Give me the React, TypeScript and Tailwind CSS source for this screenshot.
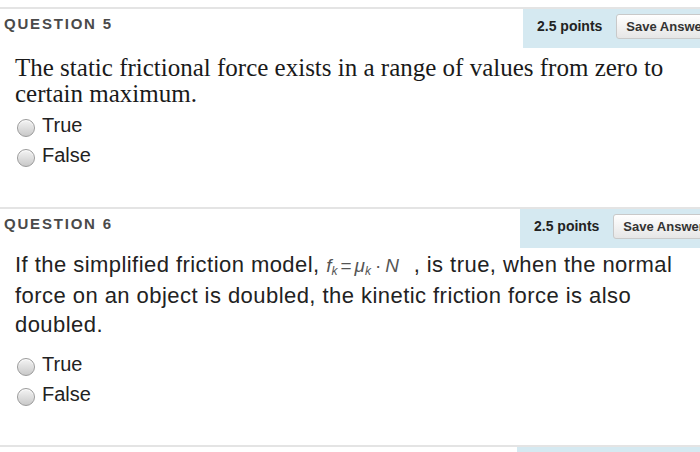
import React from "react";

const sans = { fontFamily: '"Liberation Sans", Arial, sans-serif' };
const serif = { fontFamily: '"Liberation Serif", "Times New Roman", serif' };

function Header({ label, boxLeft }: { label: string; boxLeft: number }) {
  return (
    <div className="flex h-[39px] border-t-2 border-[#e4e4e4] box-content">
      <div
        className="pl-[4px] pt-[6px] text-[15px] leading-[18px] font-bold tracking-[1.8px] text-[#4a4a4a]"
        style={sans}
      >
        {label}
      </div>
      <div className="flex-1" />
      <div
        className="flex items-start overflow-hidden bg-[#d5e9f1] pl-[14px] pt-[5px] shrink-0"
        style={{ width: 700 - boxLeft }}
      >
        <div className="flex h-[25px] items-center gap-[14px] whitespace-nowrap">
          <span className="text-[14px] font-bold text-[#222]" style={sans}>
            2.5 points
          </span>
          <span
            className="flex h-[25px] w-[110px] shrink-0 items-center rounded-[3px] border border-[#c9c9c9] bg-gradient-to-b from-white to-[#e6e6e6] px-[9px] text-[13px] font-bold text-[#333]"
            style={sans}
          >
            Save Answer
          </span>
        </div>
      </div>
    </div>
  );
}

function Radio({ label }: { label: string }) {
  return (
    <div className="flex h-[30px] items-center pl-[17px]">
      <span className="mt-[6px] h-[18px] w-[18px] shrink-0 rounded-full border border-[#9a9a9a] bg-gradient-to-b from-[#f4f4f4] to-[#c9c9c9] shadow-[inset_0_1px_1px_rgba(255,255,255,0.9)]" />
      <span className="ml-[7px] text-[20px] leading-[30px] text-[#222]" style={sans}>
        {label}
      </span>
    </div>
  );
}

export default function App() {
  return (
    <div className="h-[452px] w-[700px] overflow-hidden bg-white pt-[7px]">
      {/* Question 5 */}
      <Header label="QUESTION 5" boxLeft={523} />
      <div
        className="mt-[7px] whitespace-nowrap pl-[15px] text-[25px] leading-[26px] text-[#1a1a1a]"
        style={serif}
      >
        The static frictional force exists in a range of values from zero to
        <br />
        certain maximum.
      </div>
      <div className="mt-[3px]">
        <Radio label="True" />
        <Radio label="False" />
      </div>
      <div className="h-[37px]" />

      {/* Question 6 */}
      <Header label="QUESTION 6" boxLeft={520} />
      <div
        className="mt-[2px] whitespace-nowrap pl-[15px] text-[22px] leading-[29.5px] tracking-[0.45px] text-[#222]"
        style={sans}
      >
        If the simplified friction model,{" "}
        <span className="text-[19px] italic tracking-normal text-[#555]">
          f<sub className="text-[12px]">k</sub>
          <span className="mx-[3px] not-italic">=</span>μ<sub className="text-[12px]">k</sub>
          <span className="mx-[4px] not-italic">·</span>N
        </span>
        <span className="ml-[8px]" />{" "}
        , is true, when the normal
        <br />
        force on an object is doubled, the kinetic friction force is also
        <br />
        doubled.
      </div>
      <div className="mt-[9px]">
        <Radio label="True" />
        <Radio label="False" />
      </div>
      <div className="h-[36px]" />

      {/* next question (cut off) */}
      <div className="flex h-[10px] border-t-2 border-[#e4e4e4] box-content">
        <div className="flex-1" />
        <div className="w-[183px] bg-[#d5e9f1]" />
      </div>
    </div>
  );
}
